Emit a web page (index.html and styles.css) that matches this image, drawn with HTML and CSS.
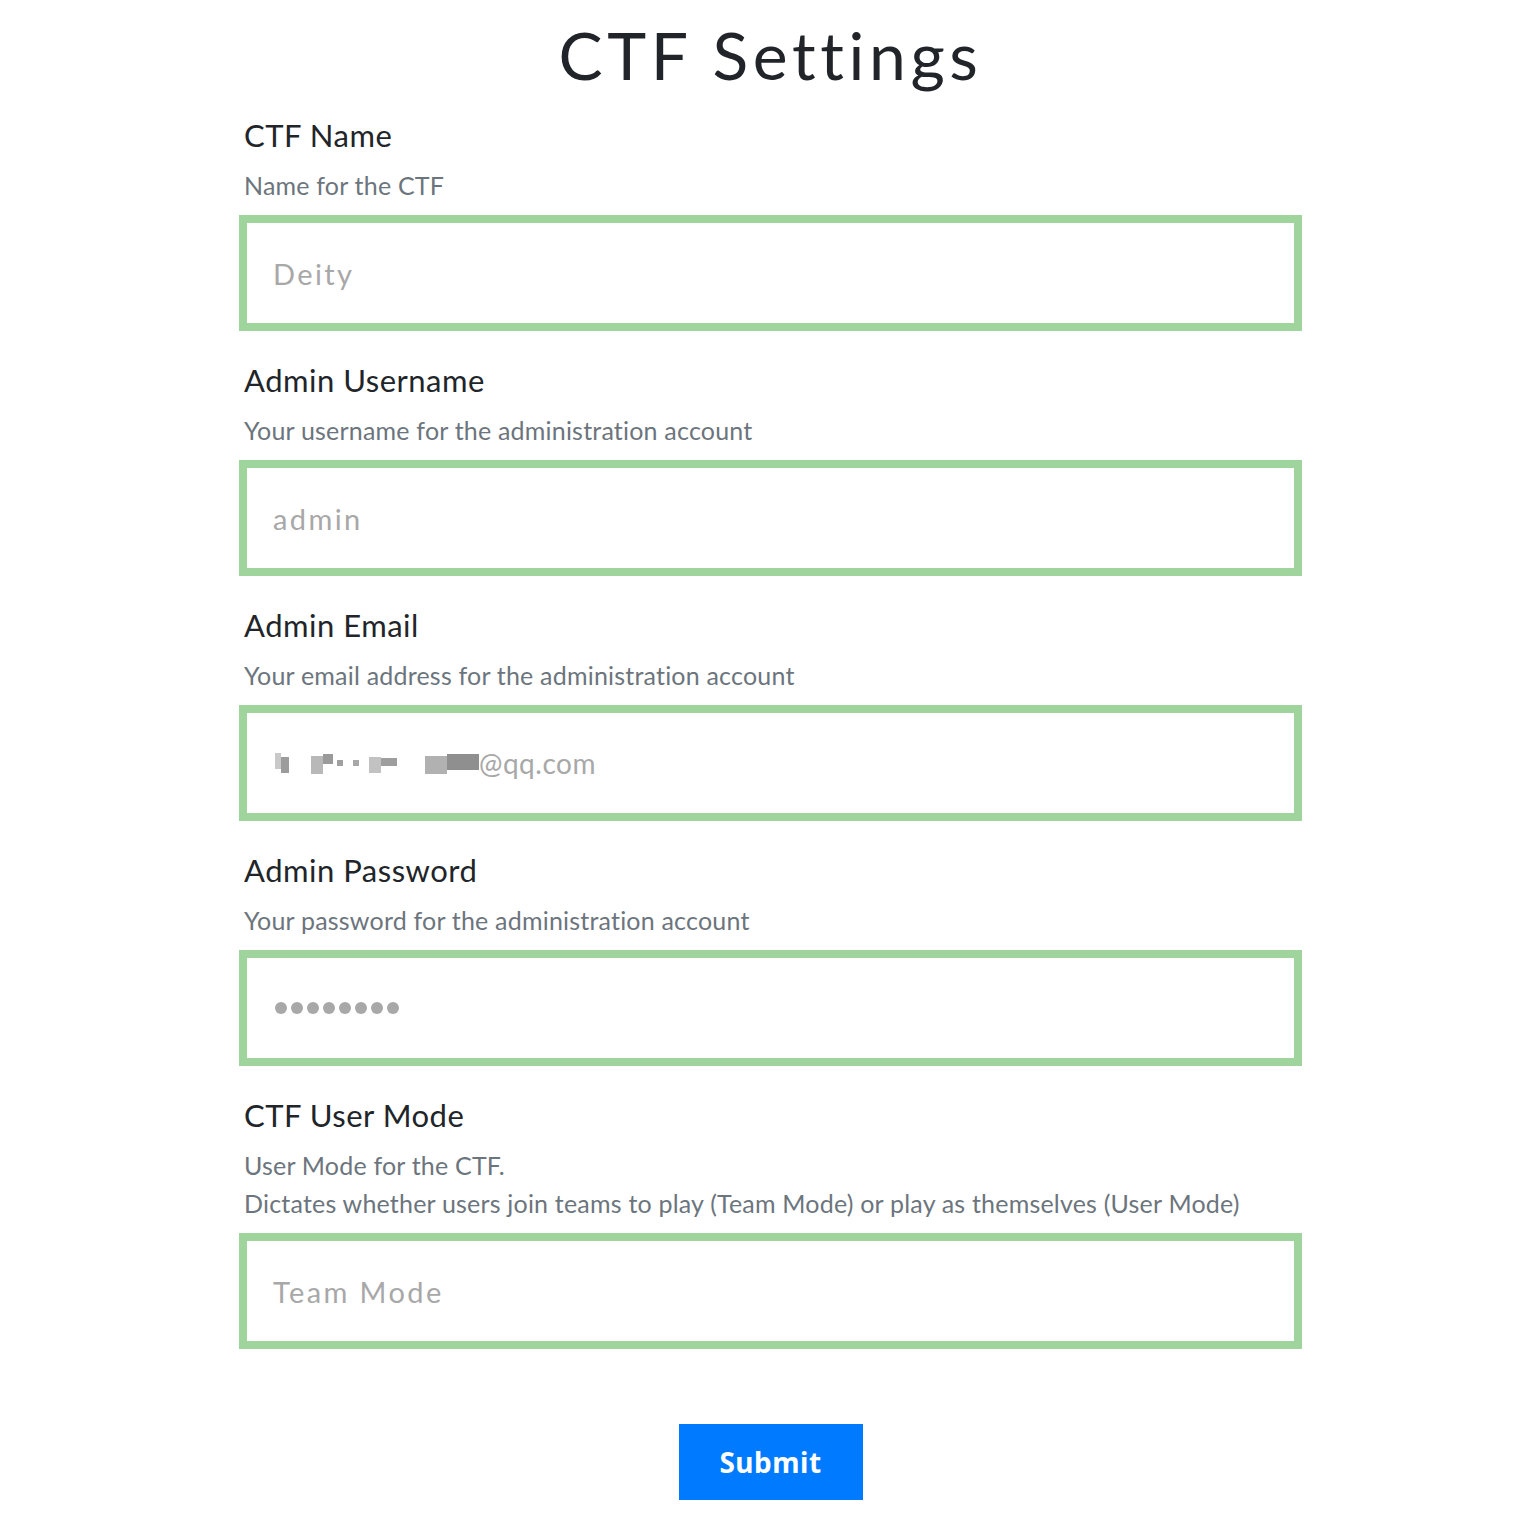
FILE: index.html
```html
<!DOCTYPE html>
<html lang="en">
<head>
<meta charset="utf-8">
<title>CTF Settings</title>
<link rel="stylesheet" href="styles.css">
</head>
<body>
<main class="page">
  <h1 class="title">CTF Settings</h1>
  <form class="form">
    <div class="group">
      <label class="label">CTF Name</label>
      <p class="desc">Name for the CTF</p>
      <div class="field"><span class="value">Deity</span></div>
    </div>
    <div class="group">
      <label class="label">Admin Username</label>
      <p class="desc">Your username for the administration account</p>
      <div class="field"><span class="value">admin</span></div>
    </div>
    <div class="group">
      <label class="label">Admin Email</label>
      <p class="desc">Your email address for the administration account</p>
      <div class="field">
        <span class="blur">
          <i class="px p1"></i><i class="px p2"></i><i class="px p3"></i><i class="px p4"></i><i class="px p5"></i><i class="px p6"></i><i class="px p7"></i><i class="px p8"></i><i class="px p9"></i><i class="px p10"></i>
        </span><span class="value email">@qq.com</span>
      </div>
    </div>
    <div class="group">
      <label class="label">Admin Password</label>
      <p class="desc">Your password for the administration account</p>
      <div class="field">
        <span class="dots"><i class="dot"></i><i class="dot"></i><i class="dot"></i><i class="dot"></i><i class="dot"></i><i class="dot"></i><i class="dot"></i><i class="dot"></i></span>
      </div>
    </div>
    <div class="group">
      <label class="label">CTF User Mode</label>
      <p class="desc">User Mode for the CTF.<br>Dictates whether users join teams to play (Team Mode) or play as themselves (User Mode)</p>
      <div class="field"><span class="value">Team Mode</span></div>
    </div>
    <div class="actions">
      <button type="button" class="submit">Submit</button>
    </div>
  </form>
</main>
</body>
</html>
```

FILE: styles.css
```css
html, body {
  margin: 0;
  padding: 0;
  background: #ffffff;
}

body {
  font-family: "Lato", "Liberation Sans", sans-serif;
  color: #212529;
}

.page {
  width: 1063px;
  margin: 0 auto;
  padding-left: 1px;
}

.title {
  margin: 15px 0 0;
  font-family: "Lato", sans-serif;
  font-weight: 400;
  font-size: 66px;
  line-height: 80px;
  letter-spacing: 4.6px;
  text-align: center;
  color: #212529;
}

.form {
  display: flex;
  flex-direction: column;
  margin-top: 22px;
}

.group {
  display: flex;
  flex-direction: column;
  margin-bottom: 31px;
}

.label {
  display: block;
  font-size: 31px;
  line-height: 36px;
  letter-spacing: 0.5px;
  font-weight: 400;
  color: #212529;
  padding-left: 5px;
}

.desc {
  margin: 13px 0 11px;
  font-size: 25px;
  line-height: 38px;
  letter-spacing: 0.2px;
  color: #6c757d;
  padding-left: 5px;
}

.field {
  box-sizing: border-box;
  height: 116px;
  border: 8px solid #9fd49d;
  display: flex;
  align-items: center;
  padding: 0 26px;
  background: #ffffff;
}

.value {
  font-family: "Lato", sans-serif;
  font-size: 29px;
  letter-spacing: 2.4px;
  color: #a8a8a8;
}

.value.email {
  font-size: 28px;
  letter-spacing: 0.5px;
}

.blur {
  display: inline-block;
  height: 30px;
  position: relative;
  width: 206px;
}

.px {
  position: absolute;
  display: block;
}
.p1 { left: 2px; top: 5px; width: 6px; height: 16px; background: #c9c9c9; }
.p2 { left: 8px; top: 9px; width: 8px; height: 16px; background: #9c9c9c; }
.p3 { left: 38px; top: 8px; width: 12px; height: 18px; background: #b8b8b8; }
.p4 { left: 50px; top: 6px; width: 10px; height: 10px; background: #9a9a9a; }
.p5 { left: 64px; top: 12px; width: 6px; height: 6px; background: #a0a0a0; }
.p6 { left: 80px; top: 12px; width: 6px; height: 6px; background: #a8a8a8; }
.p7 { left: 96px; top: 9px; width: 12px; height: 16px; background: #c2c2c2; }
.p8 { left: 108px; top: 10px; width: 16px; height: 8px; background: #9e9e9e; }
.p9 { left: 152px; top: 8px; width: 22px; height: 18px; background: #b1b1b1; }
.p10 { left: 174px; top: 6px; width: 32px; height: 16px; background: #8f8f8f; }

.dots {
  display: inline-flex;
  gap: 4px;
  padding-left: 2px;
}

.dot {
  display: block;
  width: 12px;
  height: 12px;
  border-radius: 50%;
  background: #a8a8a8;
}

.actions {
  display: flex;
  justify-content: center;
  margin-top: 44px;
}

.submit {
  width: 184px;
  height: 76px;
  border: none;
  border-radius: 0;
  background: #007bff;
  color: #ffffff;
  font-family: "Noto Sans", "Open Sans", sans-serif;
  font-weight: 700;
  font-size: 28px;
  letter-spacing: 0.5px;
  cursor: pointer;
  padding: 0;
}
```
